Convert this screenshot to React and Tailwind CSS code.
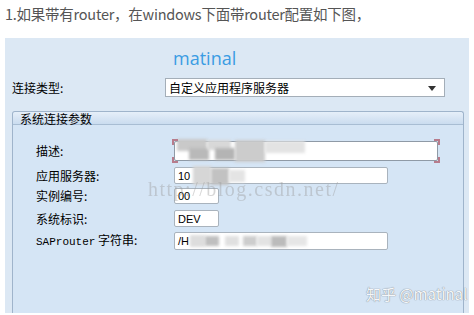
import React from 'react';

const cjk = { fontFamily: '"Noto Sans CJK SC", "Noto Sans", sans-serif' };

// pixelated blur that hides the private values
const Mosaic = ({ blocks }) => (
  <div className="absolute inset-0 pointer-events-none">
    {blocks.map((cls, i) => (
      <div key={i} className={`absolute blur-[1.5px] ${cls}`} />
    ))}
  </div>
);

const Field = ({ label, box, row, value, blocks, focus, children }) => (
  <div className={`flex items-center ${row}`}>
    <div className="w-[161px] pl-[23px] text-[12px] text-black" style={cjk}>
      {children || label}
    </div>
    <div className={`relative h-full bg-white border rounded-[2px] ${focus ? 'border-[#8f9aa6]' : 'border-[#a9b3bd]'} ${box}`}>
      <span className="absolute left-[3px] top-1/2 -translate-y-1/2 text-[11px] text-black font-['Liberation_Sans',sans-serif]">
        {value}
      </span>
      {blocks && <Mosaic blocks={blocks} />}
      {focus && (
        <>
          <div className="absolute -left-[3px] -top-[3px] w-[6px] h-[6px] border-l-2 border-t-2 border-[#b77c8c]" />
          <div className="absolute -right-[3px] -top-[3px] w-[6px] h-[6px] border-r-2 border-t-2 border-[#b77c8c]" />
          <div className="absolute -left-[3px] -bottom-[3px] w-[6px] h-[6px] border-l-2 border-b-2 border-[#b77c8c]" />
          <div className="absolute -right-[3px] -bottom-[3px] w-[6px] h-[6px] border-r-2 border-b-2 border-[#b77c8c]" />
        </>
      )}
    </div>
  </div>
);

export default function App() {
  return (
    <div className="relative w-[474px] h-[315px] bg-white overflow-hidden">
      <div className="h-[38px] pl-[5px] pt-[4px] text-[14.5px] leading-[20px] text-[#555] tracking-[-0.25px] whitespace-nowrap" style={cjk}>
        1.如果带有router，在windows下面带router配置如下图，
      </div>

      <div className="ml-[5px] w-[464px] h-[275px] bg-[#dce8f4] flex flex-col">
        <div className="pt-[9px] pl-[168px] h-[32px] text-[18px] leading-[22px] text-[#3a9ce3] font-['Open_Sans',sans-serif]">
          matinal
        </div>

        <div className="mt-[8px] h-[19px] flex items-center">
          <div className="w-[160px] pl-[7px] text-[12px] text-black" style={cjk}>连接类型:</div>
          <div className="relative w-[280px] h-full bg-white border border-[#a4aeb8] flex items-center pl-[3px] text-[12px] text-black" style={cjk}>
            自定义应用程序服务器
            <svg className="absolute right-[8px] top-[7px]" width="8" height="5" viewBox="0 0 8 5">
              <path d="M0 0h8L4 5z" fill="#333" />
            </svg>
          </div>
        </div>

        <div className="mt-[14px] ml-[7px] w-[452px] flex-1 bg-[#d5e5f5] border-x border-t border-[#9fb4cb] rounded-t-[3px] flex flex-col">
          <div className="h-[13px] bg-gradient-to-b from-[#e6eff9] to-[#cadcef] border-b border-[#a8bdd3] pl-[7px] text-[12px] leading-[13px] text-black rounded-t-[3px]" style={cjk}>
            系统连接参数
          </div>

          <Field
            label="描述:"
            row="mt-[16px] h-[20px]"
            box="w-[264px]"
            focus
            blocks={[
              'left-[2px] -top-[3px] w-[30px] h-[12px] bg-[#c9c9c9]',
              'left-[14px] top-[6px] w-[20px] h-[12px] bg-[#b9b9b9]',
              'left-[32px] -top-[2px] w-[24px] h-[10px] bg-[#d8d8d8]',
              'left-[40px] top-[6px] w-[20px] h-[12px] bg-[#b4b4b4]',
              'left-[60px] -top-[2px] w-[30px] h-[22px] bg-[#cccccc]',
              'left-[90px] -top-[1px] w-[40px] h-[12px] bg-[#e3e3e3]',
            ]}
          />
          <Field
            label="应用服务器:"
            row="mt-[6px] h-[17px]"
            box="w-[214px]"
            value="10"
            blocks={[
              'left-[18px] -top-[2px] w-[18px] h-[19px] bg-[#d6d6d6]',
              'left-[36px] top-0 w-[18px] h-[17px] bg-[#c2c2c2]',
              'left-[54px] top-[2px] w-[16px] h-[12px] bg-[#e4e4e4]',
            ]}
          />
          <Field label="实例编号:" row="mt-[4px] h-[16px]" box="w-[45px]" value="00" />
          <Field label="系统标识:" row="mt-[6px] h-[17px]" box="w-[45px]" value="DEV" />
          <Field
            row="mt-[5px] h-[18px]"
            box="w-[214px]"
            value="/H"
            blocks={[
              'left-[15px] top-[2px] w-[15px] h-[12px] bg-[#dddddd]',
              'left-[30px] top-[3px] w-[14px] h-[10px] bg-[#bfbfbf]',
              'left-[50px] top-[3px] w-[14px] h-[10px] bg-[#e0e0e0]',
              'left-[68px] top-[3px] w-[14px] h-[10px] bg-[#cdcdcd]',
              'left-[82px] top-[3px] w-[14px] h-[10px] bg-[#e3e3e3]',
              'left-[96px] top-[3px] w-[16px] h-[11px] bg-[#bbbbbb]',
              'left-[112px] top-[3px] w-[20px] h-[10px] bg-[#e6e6e6]',
            ]}
          >
            <span className="text-[11px] font-['Liberation_Mono',monospace]">SAProuter</span> 字符串:
          </Field>
        </div>
      </div>

      <div className="absolute left-[148px] top-[174px] text-[20px] text-[#9a9a9a] opacity-40 pointer-events-none tracking-[1.5px] font-['Liberation_Serif',serif]">
        http://blog.csdn.net/
      </div>

      <div
        className="absolute left-[366px] top-[284px] whitespace-nowrap text-[15px] leading-[20px] text-[#f4f7fa] pointer-events-none [text-shadow:0_0_1px_#8a8f96,0_0_1px_#8a8f96]"
        style={cjk}
      >
        知乎 @matinal
      </div>
    </div>
  );
}
